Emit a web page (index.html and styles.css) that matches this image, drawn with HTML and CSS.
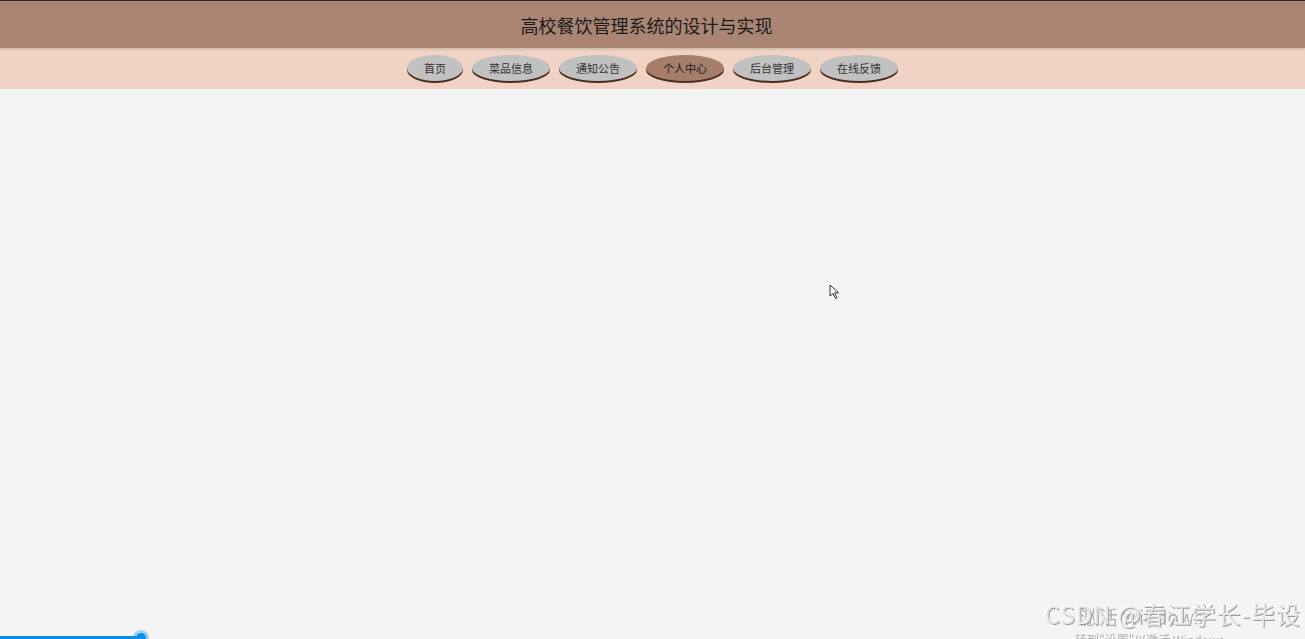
FILE: index.html
```html
<!DOCTYPE html>
<html lang="zh-CN">
<head>
  <meta charset="UTF-8" />
  <meta name="viewport" content="width=device-width, initial-scale=1.0"/>
  <title>高校餐饮管理系统的设计与实现</title>
  <link rel="stylesheet" href="styles.css">
</head>
<body>

  <!-- Header -->
  <header class="top">
    <h1>高校餐饮管理系统的设计与实现</h1>
  </header>

  <!-- Menu -->
  <nav class="menu">
    <a class="menu-item" href="#">首页</a>
    <a class="menu-item" href="#">菜品信息</a>
    <a class="menu-item" href="#">通知公告</a>
    <a class="menu-item active" href="#">个人中心</a>
    <a class="menu-item" href="#">后台管理</a>
    <a class="menu-item" href="#">在线反馈</a>
  </nav>

  <main class="content"></main>

  <!-- mouse pointer -->
  <svg class="pointer" width="12" height="16" viewBox="0 0 12 16">
    <path d="M1 1 L1 12 L4 9.5 L6.5 14.5 L8 13.8 L5.6 8.8 L9.5 8.8 Z" fill="#fff" stroke="#333" stroke-width="1"/>
  </svg>

  <!-- video progress -->
  <div class="progress">
    <div class="progress-bar"></div>
    <span class="progress-knob"></span>
  </div>

  <div class="watermark">
    <span class="wm-activate">激活 Windows</span>
    <span class="wm-csdn">CSDN @春江学长-毕设</span>
    <span class="wm-sub">转到"设置"以激活 Windows。</span>
  </div>

</body>
</html>
```

FILE: styles.css
```css
body {
  margin: 0;
  background: #f4f4f4;
  font-family: "Noto Sans CJK SC", "Noto Sans", sans-serif;
  color: #333;
  height: 639px;
  overflow: hidden;
}

.top {
  background: #ab8574;
  border-top: 1px solid #2a2a2a;
  height: 47px;
  display: flex;
  align-items: center;
  justify-content: center;
  padding-right: 12px;
  box-shadow: 0 1px 3px rgba(0, 0, 0, 0.18);
  position: relative;
  z-index: 1;
}

.top h1 {
  margin: 0;
  font-size: 18px;
  font-weight: normal;
  color: #1a1a1a;
}

.menu {
  background: #f0d3c4;
  height: 41px;
  display: flex;
  justify-content: center;
  align-items: flex-start;
  gap: 9px;
  padding-top: 7px;
  box-sizing: border-box;
}

.menu-item {
  display: block;
  height: 26px;
  line-height: 26px;
  padding: 0 17px;
  border-radius: 50%;
  background: #c1c1c1;
  color: #333;
  font-size: 11px;
  text-decoration: none;
  box-shadow: 0 2px 0 #4b2d20;
}

.menu-item.active {
  background: #a77d6c;
  color: #1a1a1a;
}

.content {
  height: 550px;
}

.pointer {
  position: absolute;
  left: 829px;
  top: 284px;
}

.progress {
  position: fixed;
  left: 0;
  bottom: 0;
  width: 146px;
  height: 6px;
}

.progress-bar {
  position: absolute;
  left: 0;
  bottom: 0;
  width: 141px;
  height: 3px;
  background: #0a8cec;
}

.progress-knob {
  position: absolute;
  left: 136px;
  top: 0;
  width: 10px;
  height: 10px;
  border-radius: 50%;
  background: #0a8cec;
  box-shadow: 0 0 0 3px rgba(10, 140, 236, 0.35);
}

.watermark {
  position: fixed;
  right: 0;
  bottom: 0;
  width: 270px;
  height: 45px;
  pointer-events: none;
}

.wm-csdn {
  position: absolute;
  right: 4px;
  top: 2px;
  font-size: 24px;
  letter-spacing: 1px;
  color: #e6e6e6;
  text-shadow: 1px 1px 0 #9c9c9c, -1px -1px 0 #ffffff;
  white-space: nowrap;
}

.wm-activate {
  position: absolute;
  left: 45px;
  top: 9px;
  font-size: 19px;
  color: rgba(110, 110, 110, 0.5);
  white-space: nowrap;
}

.wm-sub {
  position: absolute;
  left: 40px;
  top: 37px;
  font-size: 12px;
  color: rgba(110, 110, 110, 0.5);
  white-space: nowrap;
}
```
